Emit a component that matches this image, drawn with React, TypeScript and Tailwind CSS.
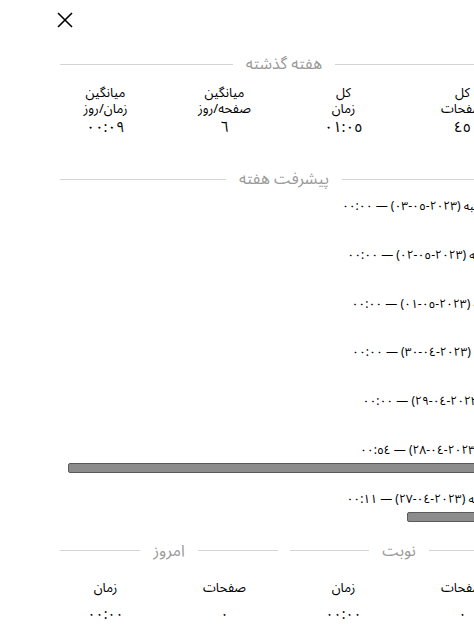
import React from "react";

type DayRow = { day: string; date: string; time: string; ratio: number };

const week: DayRow[] = [
  { day: "چهارشنبه", date: "٢٠٢٣-٠٥-٠٣", time: "٠٠:٠٠", ratio: 0 },
  { day: "سه‌شنبه", date: "٢٠٢٣-٠٥-٠٢", time: "٠٠:٠٠", ratio: 0 },
  { day: "دوشنبه", date: "٢٠٢٣-٠٥-٠١", time: "٠٠:٠٠", ratio: 0 },
  { day: "یکشنبه", date: "٢٠٢٣-٠٤-٣٠", time: "٠٠:٠٠", ratio: 0 },
  { day: "شنبه", date: "٢٠٢٣-٠٤-٢٩", time: "٠٠:٠٠", ratio: 0 },
  { day: "جمعه", date: "٢٠٢٣-٠٤-٢٨", time: "٠٠:٥٤", ratio: 1 },
  { day: "پنجشنبه", date: "٢٠٢٣-٠٤-٢٧", time: "٠٠:١١", ratio: 0.23 },
];

const SectionTitle = ({ title }: { title: string }) => (
  <div className="flex items-center gap-[13px] h-6">
    <div className="flex-1 h-px bg-[#d4d4d4]"></div>
    <span className="text-[16px] leading-6 text-[#9a9a9a]">{title}</span>
    <div className="flex-1 h-px bg-[#d4d4d4]"></div>
  </div>
);

const StatsRow = ({ items }: { items: { label: string[]; value: string }[] }) => (
  <div className="grid grid-cols-4 w-[476px] -mr-[14px]">
    {items.map((item, i) => (
      <div key={i} className="flex flex-col items-center text-center">
        {item.label.map((l) => (
          <span key={l} className="text-[13px] leading-4 text-black">
            {l}
          </span>
        ))}
        <span className="text-[15px] leading-[20px] text-black">{item.value}</span>
      </div>
    ))}
  </div>
);

export default function App() {
  return (
    <div className="w-[474px] h-[640px] overflow-hidden bg-white font-['Noto_Sans_Arabic','Noto_Sans','DejaVu_Sans',sans-serif]">
      <div dir="rtl" className="ml-[60px] w-[448px] pt-[10px]">
        <div className="flex justify-end h-5 items-center">
          <button className="-ml-[3px] text-black">
            <svg width="16" height="16" viewBox="0 0 16 16" fill="none">
              <path d="M1 1L15 15M15 1L1 15" stroke="currentColor" strokeWidth="1.6" />
            </svg>
          </button>
        </div>

        <div className="mt-[22px]">
          <SectionTitle title="هفته گذشته" />
        </div>
        <div className="mt-[9px]">
          <StatsRow
            items={[
              { label: ["کل", "صفحات"], value: "٤٥" },
              { label: ["کل", "زمان"], value: "٠١:٠٥" },
              { label: ["میانگین", "صفحه/روز"], value: "٦" },
              { label: ["میانگین", "زمان/روز"], value: "٠٠:٠٩" },
            ]}
          />
        </div>

        <div className="mt-[30px]">
          <SectionTitle title="پیشرفت هفته" />
        </div>
        <div className="mt-[6px]">
          {week.map((row) => (
            <div key={row.date} className="h-[48.8px]">
              <div className="text-[12px] leading-5 text-black whitespace-nowrap">
                {row.day} ({row.date}) — {row.time}
              </div>
              <div className="mt-[2px] h-[10px] w-[440px]">
                {row.ratio > 0 && (
                  <div
                    className="h-full bg-[#8c8c8c] border border-[#5a5a5a] rounded-[2px]"
                    style={{ width: `${row.ratio * 100}%` }}
                  ></div>
                )}
              </div>
            </div>
          ))}
        </div>

        <div className="grid grid-cols-2 gap-3">
          <SectionTitle title="نوبت" />
          <SectionTitle title="امروز" />
        </div>
        <div className="mt-[15px]">
          <div className="grid grid-cols-4 w-[476px] -mr-[14px]">
            {[
              ["صفحات", "٠"],
              ["زمان", "٠٠:٠٠"],
              ["صفحات", "٠"],
              ["زمان", "٠٠:٠٠"],
            ].map(([label, value], i) => (
              <div key={i} className="flex flex-col items-center gap-[7px]">
                <span className="text-[13px] leading-5 text-black">{label}</span>
                <span className="text-[14px] leading-5 text-black">{value}</span>
              </div>
            ))}
          </div>
        </div>
      </div>
    </div>
  );
}
